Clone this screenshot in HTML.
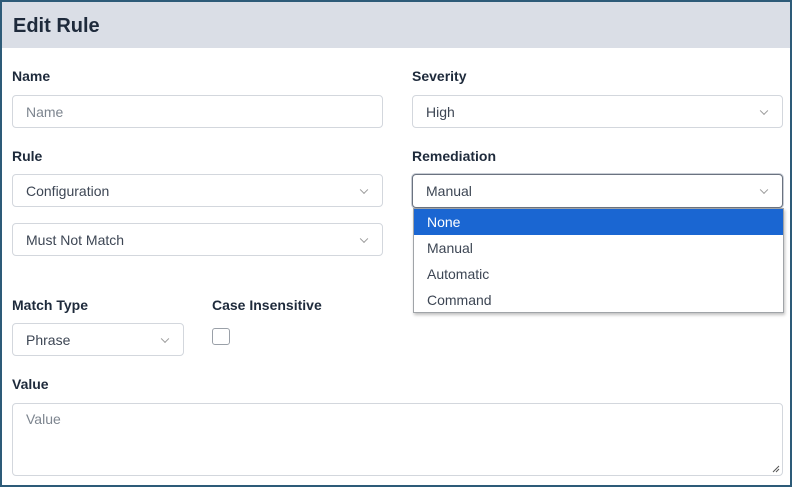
<!DOCTYPE html><html><head><style>
*{box-sizing:border-box;margin:0;padding:0}
body{width:792px;height:487px;overflow:hidden;background:#fff;font-family:"Liberation Sans",sans-serif;position:relative}
.frame{position:absolute;inset:0;border:2px solid #2d5b78;}
.hdr{position:absolute;left:2px;top:2px;right:2px;height:46px;background:#dadee6;}
.hdr span{position:absolute;left:11px;top:13px;font-size:20px;font-weight:bold;color:#1e2a3b}
.lbl{position:absolute;font-size:14px;font-weight:bold;color:#1e2a3b}
.in{position:absolute;border:1px solid #d3d7dd;border-radius:4px;background:#fff;font-size:14px;color:#3d4654;padding-left:13px;display:flex;align-items:center}
.ph{color:#7d858f}
.chev{position:absolute;right:15px;top:50%;width:6px;height:6px;border-right:1px solid #999;border-bottom:1px solid #999;transform:translateY(-70%) rotate(45deg)}
.dd{position:absolute;left:413px;top:208px;width:371px;height:105px;background:#fff;border:1px solid #a0a4a8;box-shadow:1px 2px 3px rgba(0,0,0,.25);font-size:14px;color:#3d4654}
.dd div{height:26px;line-height:26px;padding-left:13px}
</style></head><body>
<div class="frame"></div>
<div class="hdr"><span>Edit Rule</span></div>
<div class="lbl" style="left:12px;top:68px">Name</div>
<div class="in" style="left:12px;top:95px;width:371px;height:33px"><span class="ph">Name</span></div>
<div class="lbl" style="left:412px;top:68px">Severity</div>
<div class="in" style="left:412px;top:95px;width:371px;height:33px">High<i class="chev"></i></div>
<div class="lbl" style="left:12px;top:148px">Rule</div>
<div class="in" style="left:12px;top:174px;width:371px;height:33px">Configuration<i class="chev"></i></div>
<div class="lbl" style="left:412px;top:148px">Remediation</div>
<div class="in" style="left:412px;top:174px;width:371px;height:34px;border:1px solid #6b7380;box-shadow:0 0 0 1px #c9ced6">Manual<i class="chev"></i></div>
<div class="in" style="left:12px;top:223px;width:371px;height:33px">Must Not Match<i class="chev"></i></div>
<div class="lbl" style="left:12px;top:297px">Match Type</div>
<div class="in" style="left:12px;top:323px;width:172px;height:33px">Phrase<i class="chev"></i></div>
<div class="lbl" style="left:212px;top:297px">Case Insensitive</div>
<div style="position:absolute;left:212px;top:328px;width:18px;height:17px;border:1px solid #9aa0a8;border-radius:3px"></div>
<div class="lbl" style="left:12px;top:376px">Value</div>
<div class="in" style="left:12px;top:403px;width:771px;height:73px;align-items:flex-start;padding-top:7px"><span class="ph">Value</span>
<svg style="position:absolute;right:2px;bottom:2px" width="8" height="8"><path d="M1 7L7 1M4 7L7 4" stroke="#555" stroke-width="1"/></svg></div>
<div class="dd"><div style="background:#1a66d2;color:#fff">None</div><div>Manual</div><div>Automatic</div><div>Command</div></div>
</body></html>
